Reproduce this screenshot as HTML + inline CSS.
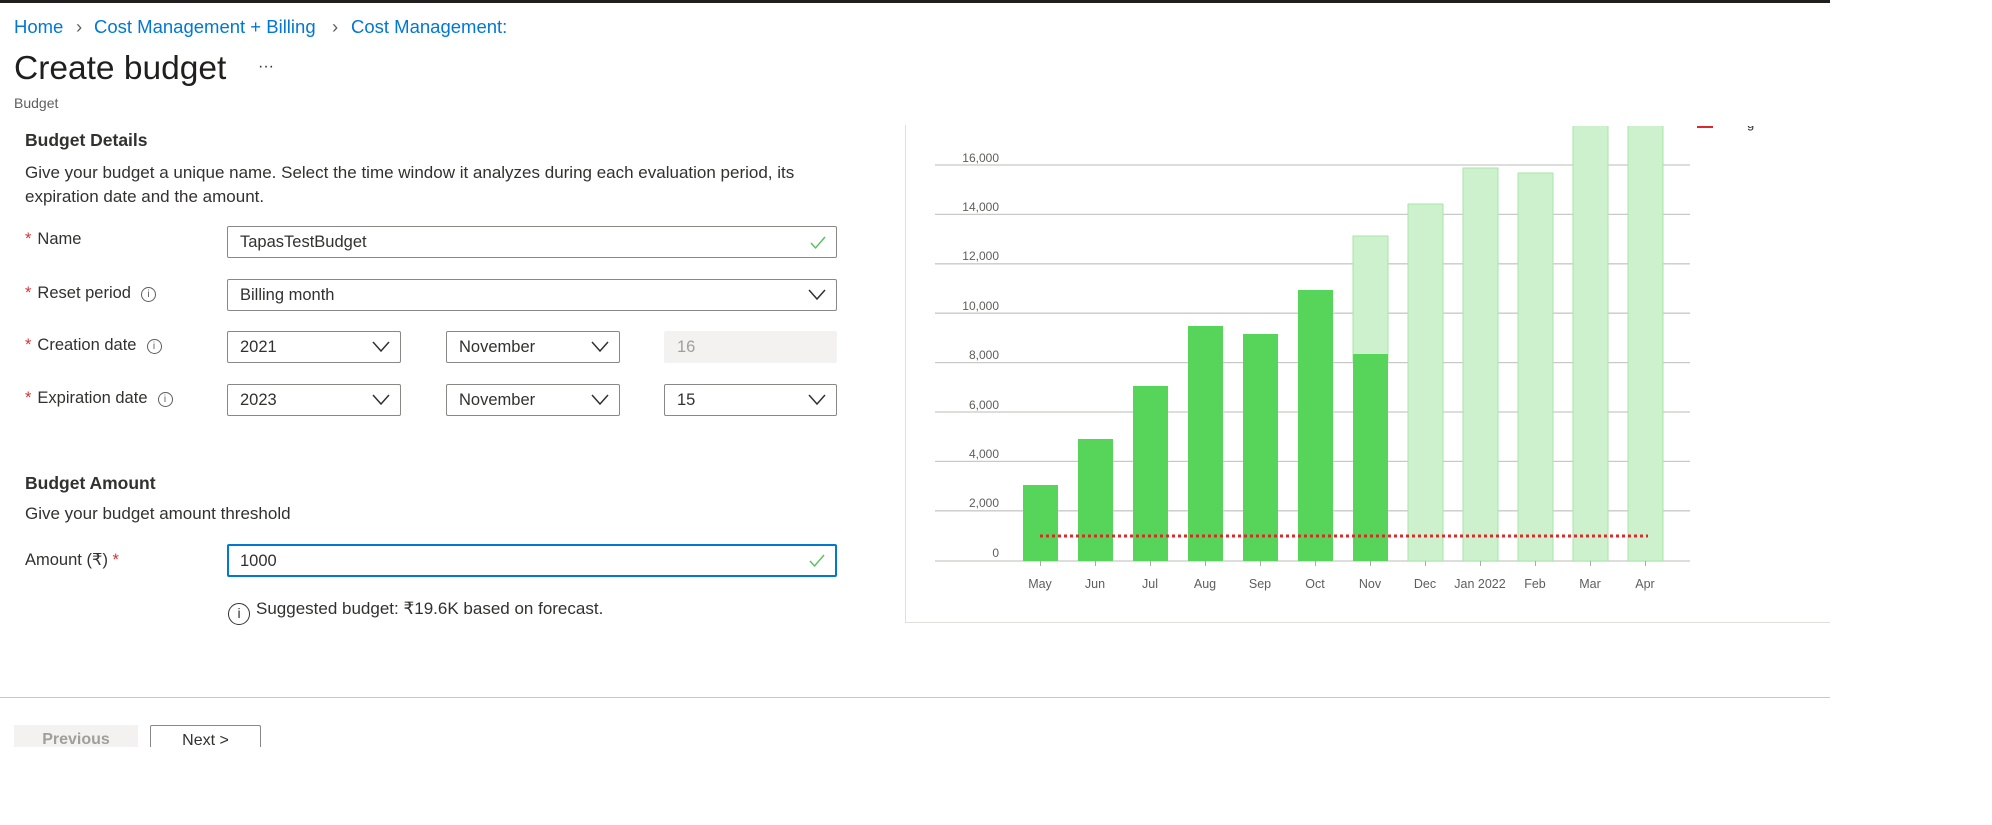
<!DOCTYPE html>
<html><head><meta charset="utf-8"><style>
*{box-sizing:border-box;margin:0;padding:0}
body{width:1992px;height:825px;background:#fff;position:relative;overflow:hidden;font-family:"Liberation Sans",sans-serif;color:#323130}
.a{position:absolute;white-space:nowrap}
.bc{top:16px;font-size:18.5px;color:#0078d4}
.lbl{font-size:16.5px;color:#323130;left:25px}
.req{color:#d13438;margin-right:6px}
.inp{position:absolute;border:1px solid #8a8886;border-radius:2px;height:32px;font-size:16.5px;padding-left:12px;line-height:30px;color:#323130}
.chev{position:absolute;right:10px;top:9px}
.info{display:inline-block;width:15px;height:15px;border:1px solid #605e5c;border-radius:50%;font-size:10px;line-height:13px;text-align:center;color:#605e5c;margin-left:10px;vertical-align:1px}
</style></head><body>
<div class="a" style="left:0;top:0;width:1830px;height:3px;background:#201f1e"></div>
<div class="a bc" style="left:14px">Home</div>
<div class="a bc" style="left:76px;color:#605e5c">›</div>
<div class="a bc" style="left:94px">Cost Management + Billing</div>
<div class="a bc" style="left:332px;color:#605e5c">›</div>
<div class="a bc" style="left:351px">Cost Management:</div>
<div class="a" style="left:14px;top:50px;font-size:33.5px;color:#201f1e">Create budget</div>
<div class="a" style="left:258px;top:58px;font-size:16px;color:#323130">···</div>
<div class="a" style="left:14px;top:95px;font-size:14px;color:#605e5c">Budget</div>

<div class="a" style="left:25px;top:130px;font-size:17.5px;font-weight:bold;color:#323130">Budget Details</div>
<div class="a" style="left:25px;top:161px;font-size:17px;line-height:24px">Give your budget a unique name. Select the time window it analyzes during each evaluation period, its<br>expiration date and the amount.</div>

<div class="a lbl" style="top:230px"><span class="req">*</span>Name</div>
<div class="inp" style="left:227px;top:226px;width:610px">TapasTestBudget<svg class="chev" width="16" height="14" viewBox="0 0 16 14"><path d="M1 7l4.5 5L15 1" fill="none" stroke="#57c05a" stroke-width="1.4"/></svg></div>

<div class="a lbl" style="top:284px"><span class="req">*</span>Reset period<span class="info">i</span></div>
<div class="inp" style="left:227px;top:279px;width:610px">Billing month<svg class="chev" width="18" height="12" viewBox="0 0 18 12"><path d="M1 1l8 9 8-9" fill="none" stroke="#323130" stroke-width="1.5"/></svg></div>

<div class="a lbl" style="top:336px"><span class="req">*</span>Creation date<span class="info">i</span></div>
<div class="inp" style="left:227px;top:331px;width:174px">2021<svg class="chev" width="18" height="12" viewBox="0 0 18 12"><path d="M1 1l8 9 8-9" fill="none" stroke="#323130" stroke-width="1.5"/></svg></div>
<div class="inp" style="left:446px;top:331px;width:174px">November<svg class="chev" width="18" height="12" viewBox="0 0 18 12"><path d="M1 1l8 9 8-9" fill="none" stroke="#323130" stroke-width="1.5"/></svg></div>
<div class="inp" style="left:664px;top:331px;width:173px;background:#f3f2f1;border-color:#f3f2f1;color:#a19f9d">16</div>

<div class="a lbl" style="top:389px"><span class="req">*</span>Expiration date<span class="info">i</span></div>
<div class="inp" style="left:227px;top:384px;width:174px">2023<svg class="chev" width="18" height="12" viewBox="0 0 18 12"><path d="M1 1l8 9 8-9" fill="none" stroke="#323130" stroke-width="1.5"/></svg></div>
<div class="inp" style="left:446px;top:384px;width:174px">November<svg class="chev" width="18" height="12" viewBox="0 0 18 12"><path d="M1 1l8 9 8-9" fill="none" stroke="#323130" stroke-width="1.5"/></svg></div>
<div class="inp" style="left:664px;top:384px;width:173px">15<svg class="chev" width="18" height="12" viewBox="0 0 18 12"><path d="M1 1l8 9 8-9" fill="none" stroke="#323130" stroke-width="1.5"/></svg></div>

<div class="a" style="left:25px;top:473px;font-size:17.5px;font-weight:bold">Budget Amount</div>
<div class="a" style="left:25px;top:504px;font-size:17px">Give your budget amount threshold</div>
<div class="a lbl" style="top:550px">Amount (₹) <span class="req" style="margin:0">*</span></div>
<div class="inp" style="left:227px;top:544px;width:610px;height:33px;border:2px solid #0078d4;padding-left:11px">1000<svg class="chev" width="16" height="14" viewBox="0 0 16 14" style="top:8px"><path d="M1 7l4.5 5L15 1" fill="none" stroke="#57c05a" stroke-width="1.4"/></svg></div>
<div class="a" style="left:228px;top:599px;font-size:17px"><span style="display:inline-block;width:22px;height:22px;border:1.5px solid #323130;border-radius:50%;text-align:center;font-size:14px;line-height:19px;margin-right:6px;vertical-align:-4px">i</span>Suggested budget: ₹19.6K based on forecast.</div>

<div class="a" style="left:0;top:697px;width:1830px;height:1px;background:#c8c6c4"></div>
<div class="a" style="left:14px;top:725px;width:124px;height:22px;background:#f3f2f1;overflow:hidden;color:#a19f9d;font-size:16px;text-align:center;line-height:30px;font-weight:bold">Previous</div>
<div class="a" style="left:150px;top:725px;width:111px;height:22px;border:1px solid #8a8886;border-bottom:none;border-radius:2px 2px 0 0;overflow:hidden;font-size:16px;text-align:center;line-height:30px">Next &gt;</div>

<div class="a" style="left:905px;top:125px;width:1px;height:497px;background:#e1dfdd"></div>
<div class="a" style="left:905px;top:622px;width:925px;height:1px;background:#e1dfdd"></div>

<svg class="a" style="left:0;top:0" width="1992" height="825" viewBox="0 0 1992 825">
<defs><clipPath id="c"><rect x="906" y="126" width="1000" height="500"/></clipPath></defs>
<g clip-path="url(#c)">
<g stroke="#c8cac8" stroke-width="1.3">
<line x1="935" x2="1690" y1="165" y2="165"/><line x1="935" x2="1690" y1="214.4" y2="214.4"/><line x1="935" x2="1690" y1="263.8" y2="263.8"/><line x1="935" x2="1690" y1="313.2" y2="313.2"/><line x1="935" x2="1690" y1="362.6" y2="362.6"/><line x1="935" x2="1690" y1="412" y2="412"/><line x1="935" x2="1690" y1="461.4" y2="461.4"/><line x1="935" x2="1690" y1="510.8" y2="510.8"/><line x1="935" x2="1690" y1="561" y2="561"/>
</g>
<g font-family="Liberation Sans" font-size="12" fill="#605e5c" text-anchor="end">
<text x="999" y="162">16,000</text><text x="999" y="211">14,000</text><text x="999" y="260">12,000</text><text x="999" y="310">10,000</text><text x="999" y="359">8,000</text><text x="999" y="409">6,000</text><text x="999" y="458">4,000</text><text x="999" y="507">2,000</text><text x="999" y="557">0</text>
</g>
<g fill="#cdf1cd" stroke="#a9e3a9" stroke-width="1">
<rect x="1353" y="236" width="35" height="125"/><rect x="1408" y="204" width="35" height="357"/><rect x="1463" y="168" width="35" height="393"/><rect x="1518" y="173" width="35" height="388"/><rect x="1573" y="120" width="35" height="441"/><rect x="1628" y="120" width="35" height="441"/>
</g>
<g fill="#57d55a">
<rect x="1023" y="485" width="35" height="76"/><rect x="1078" y="439" width="35" height="122"/><rect x="1133" y="386" width="35" height="175"/><rect x="1188" y="326" width="35" height="235"/><rect x="1243" y="334" width="35" height="227"/><rect x="1298" y="290" width="35" height="271"/><rect x="1353" y="354" width="35" height="207"/>
</g>
<line x1="1040" x2="1648" y1="536" y2="536" stroke="#d92b2b" stroke-width="3" stroke-dasharray="3,3"/>
<g stroke="#aaa"><line x1="1040.5" x2="1040.5" y1="561" y2="566"/><line x1="1095.5" x2="1095.5" y1="561" y2="566"/><line x1="1150.5" x2="1150.5" y1="561" y2="566"/><line x1="1205.5" x2="1205.5" y1="561" y2="566"/><line x1="1260.5" x2="1260.5" y1="561" y2="566"/><line x1="1315.5" x2="1315.5" y1="561" y2="566"/><line x1="1370.5" x2="1370.5" y1="561" y2="566"/><line x1="1425.5" x2="1425.5" y1="561" y2="566"/><line x1="1480.5" x2="1480.5" y1="561" y2="566"/><line x1="1535.5" x2="1535.5" y1="561" y2="566"/><line x1="1590.5" x2="1590.5" y1="561" y2="566"/><line x1="1645.5" x2="1645.5" y1="561" y2="566"/></g>
<g font-family="Liberation Sans" font-size="12.5" fill="#605e5c" text-anchor="middle">
<text x="1040" y="588">May</text><text x="1095" y="588">Jun</text><text x="1150" y="588">Jul</text><text x="1205" y="588">Aug</text><text x="1260" y="588">Sep</text><text x="1315" y="588">Oct</text><text x="1370" y="588">Nov</text><text x="1425" y="588">Dec</text><text x="1480" y="588">Jan 2022</text><text x="1535" y="588">Feb</text><text x="1590" y="588">Mar</text><text x="1645" y="588">Apr</text>
</g>
<rect x="1697" y="125" width="16" height="3" fill="#d92b2b"/>
<text x="1747" y="128" font-family="Liberation Sans" font-size="13" fill="#323130">g</text>
</g>
</svg>
</body></html>
